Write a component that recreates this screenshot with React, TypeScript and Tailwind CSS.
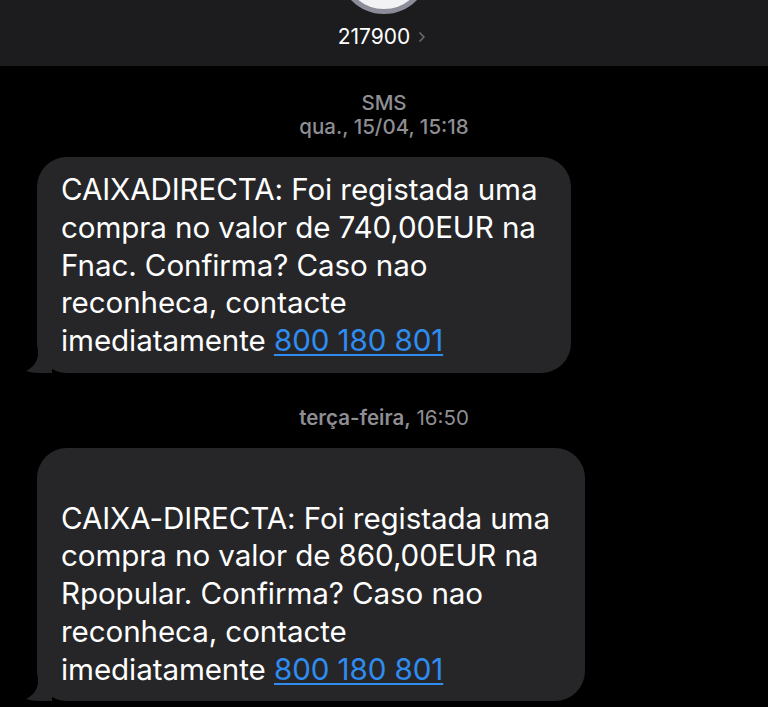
import { ChevronRight } from "lucide-react";

const font = { fontFamily: "Inter, 'Noto Sans', sans-serif" };

function Tail() {
  return (
    <svg className="absolute -left-[11px] bottom-0" width="26" height="24" viewBox="0 0 26 24">
      <path d="M12 0 L26 0 L26 24 L14 24 C8 24 4 23 0 22 C6 19 11 14 12 6 Z" fill="#262628" />
    </svg>
  );
}

function Bubble({ lines, width, blankTop }: { lines: any[]; width: string; blankTop?: boolean }) {
  return (
    <div className={"relative ml-[37px] rounded-[30px] bg-[#262628] pl-6 pt-[14px] pb-[13px] text-[29.6px] leading-[37.75px] tracking-[-0.1px] text-white " + width}>
      {blankTop && <div className="h-[37.75px]" />}
      {lines.map((l, i) => (
        <div key={i} className="whitespace-nowrap">
          {l}
        </div>
      ))}
      <Tail />
    </div>
  );
}

export default function App() {
  const link = <span className="text-[#2f8cf0] underline decoration-[1.5px] underline-offset-[3px]">800 180 801</span>;

  return (
    <div className="h-[707px] w-[768px] overflow-hidden bg-black" style={font}>
      <div className="relative flex h-[66px] flex-col items-center bg-[#1c1c1e]">
        <div className="absolute -top-[78px] h-[92px] w-[92px] rounded-full border-[5px] border-[#8d8d99] bg-[#f2f2f5]" />
        <div className="mt-[25px] flex items-center gap-1 text-[21px] leading-6 text-white">
          <span>217900</span>
          <ChevronRight className="h-4 w-4 text-[#6c6c70]" strokeWidth={2.5} />
        </div>
      </div>

      <div className="mt-[25px] flex flex-col items-center text-[20.5px] leading-6 font-medium text-[#8e8e93]">
        <span>SMS</span>
        <span>qua., 15/04, 15:18</span>
      </div>

      <div className="mt-[18px]">
        <Bubble
          width="w-[534px]"
          lines={[
            "CAIXADIRECTA: Foi registada uma",
            "compra no valor de 740,00EUR na",
            "Fnac. Confirma? Caso nao",
            "reconheca, contacte",
            <>imediatamente {link}</>,
          ]}
        />
      </div>

      <div className="mt-[33px] text-center text-[20.5px] leading-6 text-[#8e8e93]">
        <span className="font-semibold">terça-feira,</span> <span>16:50</span>
      </div>

      <div className="mt-[18px]">
        <Bubble
          width="w-[548px]"
          blankTop
          lines={[
            "CAIXA-DIRECTA: Foi registada uma",
            "compra no valor de 860,00EUR na",
            "Rpopular. Confirma? Caso nao",
            "reconheca, contacte",
            <>imediatamente {link}</>,
          ]}
        />
      </div>
    </div>
  );
}
